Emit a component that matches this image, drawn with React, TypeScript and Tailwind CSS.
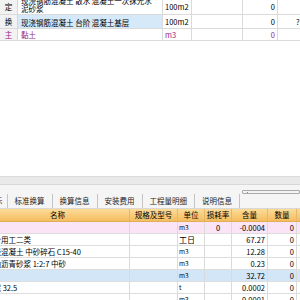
import React from 'react';

// top grid: label | name | unit | blank | value | more
const topRows = [
  {
    tag: '定',
    name: ['现浇钢筋混凝土 散水 混凝土一次抹光水', '泥砂浆'],
    unit: '100m2',
    value: '0',
    more: '',
    h: 'h-[15px]',
    tone: 'text-black',
    selected: false,
  },
  {
    tag: '换',
    name: ['现浇钢筋混凝土 台阶 混凝土基层'],
    unit: '100m2',
    value: '0',
    more: '?',
    h: 'h-[14px]',
    tone: 'text-black',
    selected: true,
  },
  {
    tag: '主',
    name: ['黏土'],
    unit: 'm3',
    value: '0',
    more: '',
    h: 'h-[12px]',
    tone: 'text-[#9a1d8a]',
    selected: false,
  },
];

const tabs = ['标准换算', '换算信息', '安装费用', '工程量明细', '说明信息'];

const rows = [
  { name: '', spec: '', unit: 'm3', loss: '0', qty: '-0.0004', num: '0', bg: 'bg-[#fbe4f6]' },
  { name: '综合用工二类', spec: '', unit: '工日', loss: '', qty: '67.27', num: '0', bg: 'bg-white' },
  { name: '现浇混凝土 中砂碎石 C15-40', spec: '', unit: 'm3', loss: '', qty: '12.28', num: '0', bg: 'bg-white' },
  { name: '石油沥青砂浆 1:2:7 中砂', spec: '', unit: 'm3', loss: '', qty: '0.23', num: '0', bg: 'bg-white' },
  { name: '', spec: '', unit: 'm3', loss: '', qty: '32.72', num: '0', bg: 'bg-[#d3e6f8]' },
  { name: '水泥 32.5', spec: '', unit: 't', loss: '', qty: '0.0002', num: '0', bg: 'bg-white' },
  { name: '水', spec: '', unit: 'm3', loss: '', qty: '0.0001', num: '0', bg: 'bg-white' },
];

export default function App() {
  return (
    <div className="w-[300px] h-[300px] overflow-hidden bg-white flex flex-col text-[7.5px] leading-none text-black font-['Noto_Sans_CJK_SC','Noto_Sans',sans-serif]">
      {/* upper grid */}
      <div className="flex flex-col shrink-0">
        {topRows.map((r) => (
          <div key={r.tag} className={`flex ${r.h} border-b border-[#dadada] ${r.tone}`}>
            <div className="w-[18px] shrink-0 flex items-center justify-center bg-[#f2f2f2] border-r border-[#d6d6d6]">
              {r.tag}
            </div>
            <div
              className={`w-[145px] shrink-0 border-r border-[#dadada] pl-[3px] flex flex-col justify-end pb-[1px] overflow-hidden whitespace-nowrap leading-[8px] ${
                r.selected ? 'bg-[#d6e9f9]' : ''
              }`}
            >
              {r.name.map((l) => (
                <span key={l} className="shrink-0">{l}</span>
              ))}
            </div>
            <div className="w-[29px] shrink-0 border-r border-[#dadada] pl-[2px] flex items-center">{r.unit}</div>
            <div className="w-[51px] shrink-0 border-r border-[#dadada]" />
            <div className="w-[35px] shrink-0 border-r border-[#dadada] pr-[2px] flex items-center justify-end">{r.value}</div>
            <div className="flex-1 pl-[18px] flex items-center">{r.more}</div>
          </div>
        ))}
      </div>

      {/* empty area */}
      <div className="h-[135px] shrink-0 bg-white" />

      {/* splitter band */}
      <div className="h-[8px] shrink-0 bg-[#e9e9e9] border-t border-[#dcdcdc]" />

      {/* tab strip */}
      <div className="h-[25px] shrink-0 flex bg-[#f5f5f5] border-t border-[#d2d2d2] border-b border-[#d8d8d8] text-[#222]">
        <div className="flex items-end">
          <div className="h-[14px] ml-[-42px] pl-[7px] pr-[4px] flex items-center border-r border-[#c4c4c4] whitespace-nowrap">
            工料机显示
          </div>
          {tabs.map((t) => (
            <div key={t} className="h-[14px] px-[7px] flex items-center border-r border-[#c4c4c4] whitespace-nowrap">
              {t}
            </div>
          ))}
        </div>
        <div className="ml-auto mt-[5px] w-[58px] h-[4px] shrink-0 rounded-[1px] border border-[#a9a9a9] bg-[#f3f3f3] flex items-center">
          <span className="ml-[4px] w-[1px] h-[1px] bg-[#888]" />
        </div>
      </div>

      {/* lower grid header */}
      <div className="h-[13px] shrink-0 flex bg-linear-to-b from-[#fcdc98] to-[#f5bd5e] border-b border-[#e2ad58]">
        <div className="w-[144px] ml-[-14px] shrink-0 border-r border-[#e6b66c] flex items-center justify-center">名称</div>
        <div className="w-[48px] shrink-0 border-r border-[#e6b66c] flex items-center justify-center">规格及型号</div>
        <div className="w-[27px] shrink-0 border-r border-[#e6b66c] flex items-center justify-center">单位</div>
        <div className="w-[27px] shrink-0 border-r border-[#e6b66c] flex items-center justify-center">损耗率</div>
        <div className="w-[36px] shrink-0 border-r border-[#e6b66c] flex items-center justify-center">含量</div>
        <div className="w-[29px] shrink-0 border-r border-[#e6b66c] flex items-center justify-center">数量</div>
        <div className="flex-1" />
      </div>

      {/* lower grid rows */}
      <div className="flex flex-col">
        {rows.map((r, i) => (
          <div key={i} className={`h-[12px] shrink-0 flex border-b border-[#dddddd] ${r.bg}`}>
            <div className="w-[144px] ml-[-14px] shrink-0 border-r border-[#dadada] flex items-center whitespace-nowrap overflow-hidden">
              {r.name}
            </div>
            <div className="w-[48px] shrink-0 border-r border-[#dadada]" />
            <div className={`w-[27px] shrink-0 border-r border-[#dadada] pl-[1px] flex items-center ${r.unit === '工日' ? 'text-[8px]' : 'text-[6.5px]'}`}>
              {r.unit}
            </div>
            <div className="w-[27px] shrink-0 border-r border-[#dadada] flex items-center justify-center">{r.loss}</div>
            <div className="w-[36px] shrink-0 border-r border-[#dadada] pr-[2px] flex items-center justify-end">{r.qty}</div>
            <div className="w-[29px] shrink-0 border-r border-[#dadada] pr-[2px] flex items-center justify-end">{r.num}</div>
            <div className="flex-1" />
          </div>
        ))}
      </div>
    </div>
  );
}
